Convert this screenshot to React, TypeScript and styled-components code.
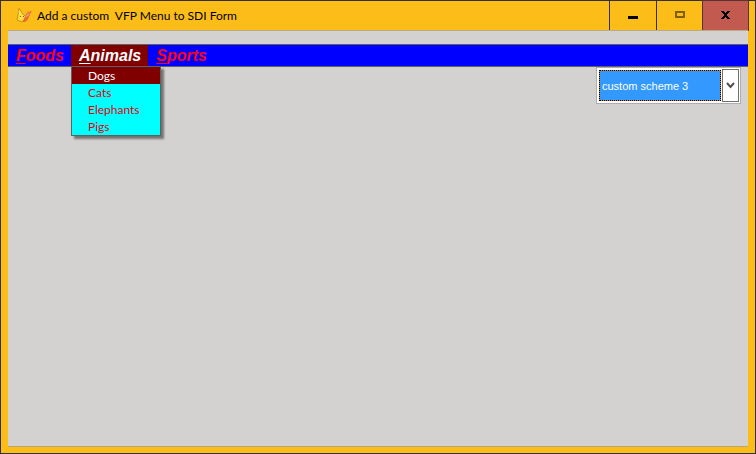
import React, { useState } from "react";
import styled, { createGlobalStyle } from "styled-components";

const GlobalStyle = createGlobalStyle`
  *, *::before, *::after { box-sizing: border-box; }
  body { margin: 0; }
  button, select { margin: 0; padding: 0; border: 0; font: inherit; color: inherit; background: none; }
`;

const Window = styled.div`
  display: flex;
  flex-direction: column;
  height: 100vh;
  border: 1px solid #333029;
  background: #fcbd19;
  font: 12px Lato, "Open Sans", sans-serif;
  color: #000;
`;

const TitleBar = styled.header`
  display: flex;
  flex: none;
  height: 30px;
  padding: 0 6px 0 14px;
  margin-top: -1px;
`;

const Title = styled.h1`
  display: flex;
  align-items: center;
  gap: 5px;
  flex: 1;
  margin: 0;
  font-size: 12px;
  font-weight: 400;
  white-space: pre;
`;

const Controls = styled.div`
  display: flex;
`;

const ControlButton = styled.button<{ $wide?: boolean; $close?: boolean }>`
  display: flex;
  align-items: center;
  justify-content: center;
  width: ${(p) => (p.$wide ? 48 : 47)}px;
  height: 31px;
  margin-left: -1px;
  border: 1px solid ${(p) => (p.$close ? "#573334" : "#333029")};
  background: ${(p) => (p.$close ? "#c35a50" : "#fcbd19")};
`;

const Client = styled.main`
  flex: 1;
  margin: 0 7px 6px;
  padding-top: 13px;
  border-top: 1px solid #b9ad85;
  border-bottom: 1px solid #b5a679;
  background: #d4d2d0;
`;

const MenuBar = styled.nav`
  display: flex;
  height: 23px;
  border: solid #606060;
  border-width: 1px 0;
  background: #00f;
`;

const MenuItem = styled.div`
  position: relative;
`;

const MenuButton = styled.button<{ $open: boolean }>`
  display: block;
  height: 21px;
  padding: 0 7px 0 8px;
  font: italic bold 16px/21px "Liberation Sans", Arial, sans-serif;
  color: ${(p) => (p.$open ? "#fff" : "#ff0010")};
  background: ${(p) => (p.$open ? "#800000" : "transparent")};

  u {
    text-decoration-thickness: 1px;
    text-underline-offset: 2px;
    text-decoration-skip-ink: none;
  }
`;

const Popup = styled.div`
  position: absolute;
  z-index: 1;
  top: 100%;
  left: 0;
  width: 90px;
  border: 1px solid #606060;
  background: #0ff;
  box-shadow: 3px 3px 2px rgba(0, 0, 0, 0.45);
`;

const PopupItem = styled.button<{ $active: boolean }>`
  display: block;
  width: 100%;
  height: 17px;
  padding-left: 16px;
  line-height: 17px;
  text-align: left;
  color: ${(p) => (p.$active ? "#fff" : "#e00010")};
  background: ${(p) => (p.$active ? "#800000" : "transparent")};
`;

const FormArea = styled.div`
  display: flex;
  justify-content: flex-end;
  padding-right: 7px;
`;

const Combo = styled.label`
  display: flex;
  width: 145px;
  height: 37px;
  padding: 1px;
  border: 1px solid #abadb3;
  background: #fff;
`;

const ComboSelect = styled.select`
  appearance: none;
  flex: 1;
  min-width: 0;
  margin: 1px;
  padding-left: 2px;
  border: 1px dotted #000;
  outline: 0;
  border-radius: 0;
  background: linear-gradient(#3399ff, #3399ff) padding-box, linear-gradient(#e08020, #e08020) border-box;
  font: 11px "Liberation Sans", Arial, sans-serif;
  color: #fff;
`;

const ComboArrow = styled.span`
  display: flex;
  align-items: center;
  justify-content: center;
  width: 17px;
  border: 1px solid #707070;
`;

const FoxIcon = () => (
  <svg width="17" height="17" viewBox="0 0 17 17" aria-hidden="true">
    <path d="M9 12 L11 7 L13 5 L17 4 L15 7 L13 12 L10 15 L7 15 Z" fill="#ee6330" />
    <path d="M10 11 L12 7 L15 5 L13 9 Z" fill="#dfa58a" />
    <path d="M4 1 L7 6 L10 9 L8 13 L6 14 L2 13 L3 8 Z" fill="#ffdb35" />
    <path d="M4 1 L7 6 L10 9 M4 1 L3 8 L2 13 L7 15 L9 13" fill="none" stroke="#c69320" />
    <path d="M4 4 L5 8 M5 11 L7 12" stroke="#fff08a" />
    <path d="M5 9 L6 10 M8 9 L9 10" stroke="#80601c" />
  </svg>
);

const menus = [
  { name: "Foods", items: ["Fruit", "Vegetables"] },
  { name: "Animals", items: ["Dogs", "Cats", "Elephants", "Pigs"] },
  { name: "Sports", items: ["Football", "Tennis"] },
];

export default function App() {
  const [open, setOpen] = useState("Animals");
  const [active, setActive] = useState("Dogs");
  return (
    <>
      <GlobalStyle />
      <Window>
        <TitleBar>
          <Title>
            <FoxIcon />
            <span>{"Add a custom  VFP Menu to SDI Form"}</span>
          </Title>
          <Controls>
            <ControlButton $wide aria-label="Minimize">
              <svg width="10" height="10"><path d="M0 5h10v3H0z" /></svg>
            </ControlButton>
            <ControlButton aria-label="Maximize">
              <svg width="10" height="9"><path d="M1 1h8v5H1z" fill="none" stroke="#80600f" strokeWidth="2" /></svg>
            </ControlButton>
            <ControlButton $close aria-label="Close">
              <svg width="9" height="10" shapeRendering="crispEdges">
                <path d="M0 0h3v1h1v1h1v-1h1v-1h3v1h-1v1h-1v1h-1v2h1v1h1v1h1v1h-3v-1h-1v-1h-1v1h-1v1h-3v-1h1v-1h1v-1h1v-2h-1v-1h-1v-1h-1z" />
              </svg>
            </ControlButton>
          </Controls>
        </TitleBar>
        <Client>
          <MenuBar>
            {menus.map(({ name, items }) => (
              <MenuItem key={name}>
                <MenuButton $open={open === name} aria-expanded={open === name} onClick={() => setOpen(name)}>
                  <u>{name[0]}</u>
                  {name.slice(1)}
                </MenuButton>
                {open === name && (
                  <Popup>
                    {items.map((item) => (
                      <PopupItem key={item} $active={item === active} onMouseEnter={() => setActive(item)}>
                        {item}
                      </PopupItem>
                    ))}
                  </Popup>
                )}
              </MenuItem>
            ))}
          </MenuBar>
          <FormArea>
            <Combo>
              <ComboSelect aria-label="Color scheme" defaultValue="custom scheme 3">
                <option>custom scheme 1</option>
                <option>custom scheme 2</option>
                <option>custom scheme 3</option>
              </ComboSelect>
              <ComboArrow>
                <svg width="9" height="7" viewBox="0 0 9 7" aria-hidden="true">
                  <path d="M1 1 L4.500 5 L8 1" fill="none" stroke="#505050" strokeWidth="2" />
                </svg>
              </ComboArrow>
            </Combo>
          </FormArea>
        </Client>
      </Window>
    </>
  );
}
